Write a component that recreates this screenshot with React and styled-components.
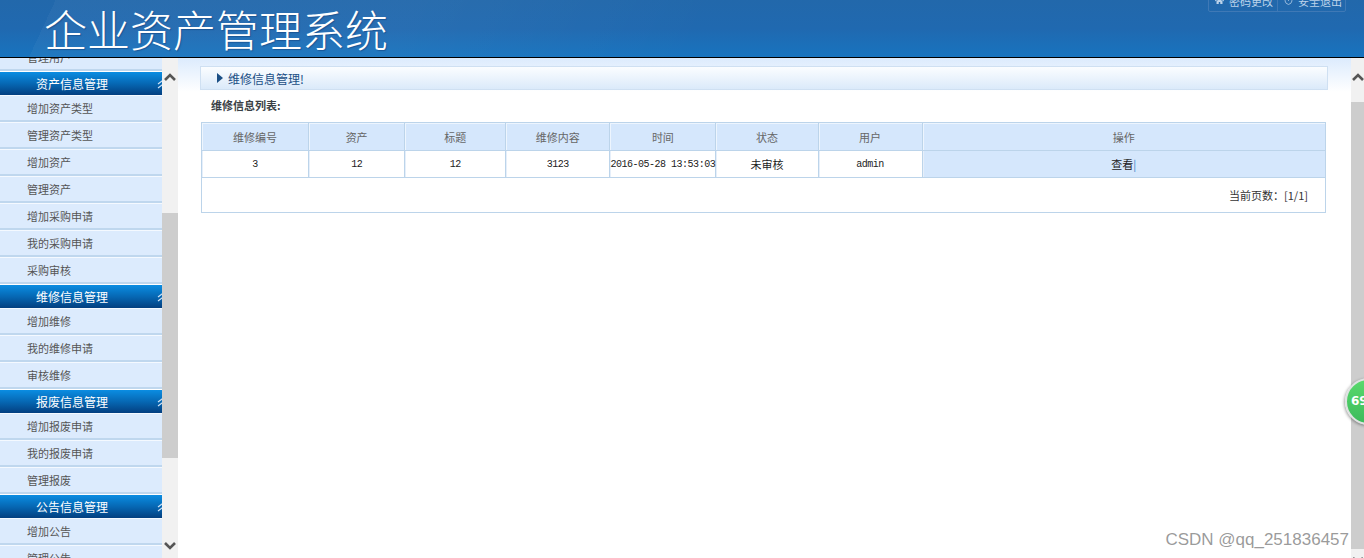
import React from 'react';
import styled, {createGlobalStyle} from 'styled-components';
import {FaHome} from 'react-icons/fa';
import {FiPower} from 'react-icons/fi';

const CJK = `"Noto Sans CJK SC", "Liberation Sans", sans-serif`;
const MONO = `"Liberation Mono", "Noto Sans CJK SC", monospace`;

const Global = createGlobalStyle`
  html, body {
    margin: 0;
    height: 558px;
    overflow: hidden;
    background: #fff;
    font-family: ${CJK};
  }
`;
const Page = styled.div`
  position: relative;
  width: 1364px;
  height: 558px;
  overflow: hidden;
  display: flex;
  flex-direction: column;
`;
const Header = styled.header`
  height: 57px;
  flex: none;
  border-bottom: 1px solid #000;
  display: flex;
  justify-content: space-between;
  overflow: hidden;
  background:
    linear-gradient(115deg, transparent 0 4%, rgba(255,255,255,.035) 4% 30%, transparent 52%),
    linear-gradient(180deg, #2268ab 0%, #2069b0 50%, #1874bf 100%);
`;
const Logo = styled.h1`
  margin: 0 0 0 44px;
  font-size: 43px;
  line-height: 57px;
  font-weight: 300;
  color: #fff;
  letter-spacing: 0;
  white-space: nowrap;
  text-shadow: 1px 1px 1px rgba(20, 70, 130, .6);
`;
const Links = styled.nav`
  display: flex;
  align-self: flex-start;
  height: 21px;
  margin: -11px 18px 0 0;
  border: 1px solid #3f79b6;
  border-radius: 2px;
`;
const LinkButton = styled.a`
  width: 68px;
  display: flex;
  align-items: center;
  gap: 5px;
  padding-left: 6px;
  box-sizing: border-box;
  font-size: 11px;
  color: #bcd3ea;
  & + & { border-left: 1px solid #3f79b6; }
  svg { width: 9px; height: 9px; flex: none; }
`;
const Body = styled.div`
  flex: 1;
  display: flex;
  min-height: 0;
`;
const Sidebar = styled.aside`
  width: 162px;
  flex: none;
  overflow: hidden;
  background: #dcebfd;
`;
const SideList = styled.div`
  margin-top: -14px;
`;
const SideHead = styled.div`
  height: 24px;
  box-sizing: border-box;
  border-top: 1px solid #fff;
  display: flex;
  align-items: center;
  justify-content: space-between;
  padding-left: 36px;
  overflow: hidden;
  font-size: 12px;
  color: #fff;
  background: linear-gradient(180deg, #0b8de2 0%, #0668b4 50%, #033f80 100%);
  svg { flex: none; margin-right: -5px; }
`;
const SideItem = styled.div`
  height: 27px;
  box-sizing: border-box;
  padding-left: 27px;
  line-height: 26px;
  font-size: 11px;
  color: #555;
  border-bottom: 2px solid #bfd7ee;
  box-shadow: inset 0 1px 0 #f4f9ff;
`;
const Track = styled.div`
  width: ${p => p.$w}px;
  flex: none;
  background: #f1f1f1;
  display: flex;
  flex-direction: column;
  align-items: center;
  overflow: hidden;
`;
const ArrowSlot = styled.div`
  height: ${p => p.$h}px;
  flex: none;
  width: 100%;
  display: flex;
  justify-content: center;
  align-items: ${p => p.$align};
  svg { flex: none; }
`;
const Thumb = styled.div`
  width: 100%;
  height: ${p => p.$h}px;
  flex: none;
  background: #cdcdcd;
`;
const Spacer = styled.div`
  flex: 1;
`;
const Main = styled.main`
  flex: 1;
  min-width: 0;
  padding: 8px 25px 0 22px;
  background: linear-gradient(180deg, #dcebfd 0, #fff 34px);
`;
const TitleBar = styled.div`
  height: 24px;
  margin-right: -2px;
  box-sizing: border-box;
  border: 1px solid #cfe0f2;
  display: flex;
  align-items: center;
  padding-left: 16px;
  gap: 5px;
  font-size: 12px;
  color: #1b4f85;
  background: linear-gradient(180deg, #fbfdff 0%, #dbeafa 100%);
`;
const Triangle = styled.i`
  width: 0;
  height: 0;
  border-left: 6px solid #1b4f85;
  border-top: 5px solid transparent;
  border-bottom: 5px solid transparent;
`;
const ListTitle = styled.div`
  height: 32px;
  padding-left: 11px;
  line-height: 30px;
  font-size: 11px;
  font-weight: 700;
  color: #3a3f45;
`;
const Table = styled.table`
  width: 1125px;
  margin-left: 1px;
  table-layout: fixed;
  border-collapse: collapse;
  font-size: 11px;
  border: 1px solid #bcd4ea;
`;
const Th = styled.th`
  height: 27px;
  padding: 0;
  font-weight: 400;
  color: #666;
  background: #d5e7fc;
  border: 1px solid #bcd4ea;
  box-shadow: inset 1px 1px 0 #edf5fe;
`;
const Td = styled.td`
  height: 26px;
  padding: 0;
  text-align: center;
  color: #222;
  border: 1px solid #bcd4ea;
  font-family: ${p => (p.$mono ? MONO : CJK)};
  font-size: ${p => (p.$mono ? '10px' : '11px')};
  letter-spacing: ${p => (p.$mono ? '-0.5px' : '0')};
  background: ${p => (p.$fill ? '#d5e7fc' : '#fff')};
  white-space: nowrap;
  box-shadow: inset 1px 0 0 #e6effa;
`;
const Pager = styled.td`
  height: 34px;
  padding: 0 17px 0 0;
  text-align: right;
  font-size: 11px;
  color: #333;
`;
const Divider = styled.span`
  color: #3b7fc4;
`;
const Badge = styled.div`
  position: absolute;
  left: 1345px;
  top: 378px;
  width: 47px;
  height: 47px;
  box-sizing: border-box;
  border-radius: 50%;
  border: 2px solid #dfe3e2;
  padding-left: 4px;
  line-height: 43px;
  font-family: "DejaVu Sans", sans-serif;
  font-size: 12px;
  font-weight: 700;
  color: #fff;
  background: linear-gradient(180deg, #5ad96d 0%, #3cbb5c 100%);
  box-shadow: -1px 1px 3px rgba(0, 0, 0, .35);
`;
const Watermark = styled.div`
  position: absolute;
  right: 15px;
  top: 529px;
  font-family: "Liberation Sans", sans-serif;
  font-size: 17px;
  line-height: 22px;
  color: rgba(110, 110, 110, .7);
  white-space: nowrap;
`;

const ChevronUp = ({color = '#555'}) => (
  <svg width="14" height="10" viewBox="0 0 14 10">
    <polyline points="2,8 7,3 12,8" fill="none" stroke={color} strokeWidth="2.6" />
  </svg>
);
const ChevronDown = () => (
  <svg width="14" height="10" viewBox="0 0 14 10">
    <polyline points="2,2 7,7 12,2" fill="none" stroke="#555" strokeWidth="2.6" />
  </svg>
);
const DoubleUp = () => (
  <svg width="10" height="10" viewBox="0 0 10 10">
    <polyline points="1,5 5,2 9,5" fill="none" stroke="#cfe3f7" strokeWidth="1.2" />
    <polyline points="1,9 5,6 9,9" fill="none" stroke="#cfe3f7" strokeWidth="1.2" />
  </svg>
);

const menu = [
  {items: ['管理用户']},
  {title: '资产信息管理', items: ['增加资产类型', '管理资产类型', '增加资产', '管理资产', '增加采购申请', '我的采购申请', '采购审核']},
  {title: '维修信息管理', items: ['增加维修', '我的维修申请', '审核维修']},
  {title: '报废信息管理', items: ['增加报废申请', '我的报废申请', '管理报废']},
  {title: '公告信息管理', items: ['增加公告', '管理公告']},
];
const columns = [
  ['维修编号', 107],
  ['资产', 96],
  ['标题', 101],
  ['维修内容', 104],
  ['时间', 106],
  ['状态', 102],
  ['用户', 104],
  ['操作', 403],
];

export default function App() {
  return (
    <Page>
      <Global />
      <Header>
        <Logo>企业资产管理系统</Logo>
        <Links>
          <LinkButton><FaHome />密码更改</LinkButton>
          <LinkButton><FiPower />安全退出</LinkButton>
        </Links>
      </Header>
      <Body>
        <Sidebar>
          <SideList>
            {menu.map((group, i) => (
              <React.Fragment key={i}>
                {group.title && <SideHead>{group.title}<DoubleUp /></SideHead>}
                {group.items.map(item => <SideItem key={item}>{item}</SideItem>)}
              </React.Fragment>
            ))}
          </SideList>
        </Sidebar>
        <Track $w={16}>
          <ArrowSlot $h={141} $align="flex-start" style={{paddingTop: 14}}><ChevronUp /></ArrowSlot>
          <Thumb $h={245} />
          <Spacer />
          <ArrowSlot $h={24} $align="center"><ChevronDown /></ArrowSlot>
        </Track>
        <Main>
          <TitleBar><Triangle />维修信息管理!</TitleBar>
          <ListTitle>维修信息列表:</ListTitle>
          <Table>
            <colgroup>
              {columns.map(([name, w]) => <col key={name} width={w} />)}
            </colgroup>
            <thead>
              <tr>{columns.map(([name]) => <Th key={name}>{name}</Th>)}</tr>
            </thead>
            <tbody>
              <tr>
                <Td $mono>3</Td>
                <Td $mono>12</Td>
                <Td $mono>12</Td>
                <Td $mono>3123</Td>
                <Td $mono>2016-05-28 13:53:03</Td>
                <Td>未审核</Td>
                <Td $mono>admin</Td>
                <Td $fill>查看<Divider>|</Divider></Td>
              </tr>
              <tr><Pager colSpan={8}>当前页数：[1/1]</Pager></tr>
            </tbody>
          </Table>
        </Main>
        <Track $w={13}>
          <ArrowSlot $h={30} $align="flex-start" style={{paddingTop: 14}}><ChevronUp /></ArrowSlot>
          <Thumb $h={447} />
          <Spacer />
          <ArrowSlot $h={23} $align="center"><ChevronDown /></ArrowSlot>
        </Track>
      </Body>
      <Badge>69</Badge>
      <Watermark>CSDN @qq_251836457</Watermark>
    </Page>
  );
}
